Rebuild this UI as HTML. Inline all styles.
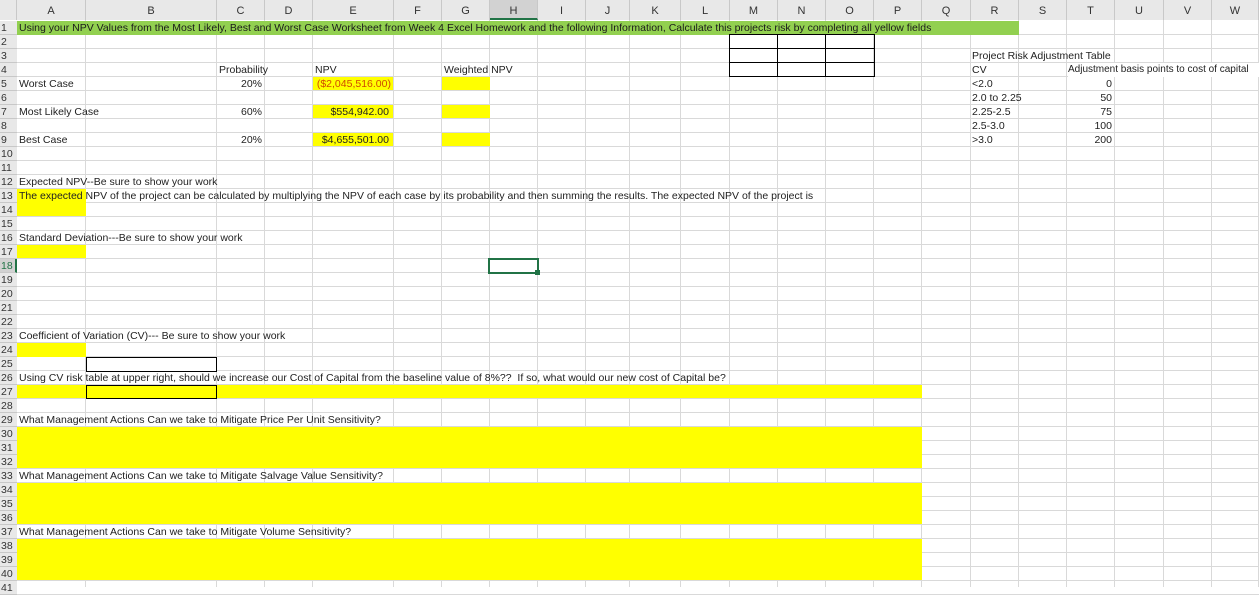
<!DOCTYPE html>
<html><head><meta charset="utf-8"><style>
body{margin:0;width:1259px;height:587px;overflow:hidden;background:#fff;font-family:"Liberation Sans",Arial,sans-serif;position:relative}
.a{position:absolute;box-sizing:border-box}
.t{position:absolute;font-size:10.5px;color:#222;white-space:nowrap;line-height:14px}
.y{position:absolute;background:#ffff00}
.h{position:absolute;top:0;height:20px;line-height:22px;text-align:center;font-size:11px;color:#333;background:#e8e8e8;border-right:1px solid #c8c8c8;box-sizing:border-box}
.r{position:absolute;left:0;width:17px;height:14px;line-height:14px;font-size:10.5px;color:#333;background:#e8e8e8;border-bottom:1px solid #c8c8c8;box-sizing:border-box;padding-left:1px}
</style></head><body>
<div id="g"></div>
<script>
var cols=[17,86,217,265,313,394,442,490,538,586,630,681,730,778,826,874,922,971,1019,1067,1115,1164,1212,1259];
var L="ABCDEFGHIJKLMNOPQRSTUVW";var s="";
for(var i=1;i<cols.length;i++)s+='<div class="a" style="left:'+(cols[i]-1)+'px;top:20px;width:1px;height:567px;background:#d9d9d9"></div>';
for(var r=1;r<=41;r++){var y=21+14*(r-1)+13;s+='<div class="a" style="left:17px;top:'+y+'px;width:1242px;height:1px;background:#d9d9d9"></div>';}
for(var i=0;i<cols.length-1;i++)s+='<div class="h" style="left:'+cols[i]+'px;width:'+(cols[i+1]-cols[i])+'px;'+(i==7?'background:#d2d2d2;border-bottom:2px solid #217346;':'')+'">'+L[i]+'</div>';
s+='<div class="h" style="left:0;width:17px;border-right:1px solid #c8c8c8"></div>';
for(var r=1;r<=41;r++)s+='<div class="r" style="top:'+(21+14*(r-1))+'px;'+(r==18?'background:#d2d2d2;color:#217346;border-right:2px solid #217346;':'')+'">'+r+'</div>';
document.getElementById('g').innerHTML=s;
</script>
<div class="a" style="left:17px;top:21px;width:1002px;height:14px;background:#92d050"></div>
<div class="t" style="left:19px;top:21px;color:#1a1a1a">Using your NPV Values from the Most Likely, Best and Worst Case Worksheet from Week 4 Excel Homework and the following Information, Calculate this projects risk by completing all yellow fields</div>
<div class="a" style="left:729px;top:34px;width:146px;height:43px;border:1px solid #000"></div>
<div class="a" style="left:729px;top:48px;width:146px;height:1px;background:#000"></div>
<div class="a" style="left:729px;top:62px;width:146px;height:1px;background:#000"></div>
<div class="a" style="left:777px;top:34px;width:1px;height:43px;background:#000"></div>
<div class="a" style="left:825px;top:34px;width:1px;height:43px;background:#000"></div>
<div class="t" style="left:219px;top:63px">Probability</div>
<div class="t" style="left:315px;top:63px">NPV</div>
<div class="t" style="left:444px;top:63px">Weighted NPV</div>
<div class="y" style="left:313px;top:77px;width:80px;height:13px"></div>
<div class="y" style="left:313px;top:105px;width:80px;height:13px"></div>
<div class="y" style="left:313px;top:133px;width:80px;height:13px"></div>
<div class="y" style="left:442px;top:77px;width:48px;height:13px"></div>
<div class="y" style="left:442px;top:105px;width:48px;height:13px"></div>
<div class="y" style="left:442px;top:133px;width:48px;height:13px"></div>
<div class="t" style="left:19px;top:77px">Worst Case</div>
<div class="t" style="left:19px;top:105px">Most Likely Case</div>
<div class="t" style="left:19px;top:133px">Best Case</div>
<div class="t" style="left:217px;width:45px;text-align:right;top:77px">20%</div>
<div class="t" style="left:217px;width:45px;text-align:right;top:105px">60%</div>
<div class="t" style="left:217px;width:45px;text-align:right;top:133px">20%</div>
<div class="t" style="left:311px;width:80px;text-align:right;top:77px;color:#d04a00;overflow:hidden">($2,045,516.00)</div>
<div class="t" style="left:313px;width:76px;text-align:right;top:105px">$554,942.00</div>
<div class="t" style="left:313px;width:76px;text-align:right;top:133px">$4,655,501.00</div>
<div class="t" style="left:972px;top:49px">Project Risk Adjustment Table</div>
<div class="t" style="left:972px;top:63px">CV</div>
<div class="t" style="left:1068px;top:63px;background:#fff;width:191px;font-size:10px">Adjustment basis points to cost of capital</div>
<div class="t" style="left:972px;top:77px">&lt;2.0</div>
<div class="t" style="left:972px;top:91px">2.0 to 2.25</div>
<div class="t" style="left:972px;top:105px">2.25-2.5</div>
<div class="t" style="left:972px;top:119px">2.5-3.0</div>
<div class="t" style="left:972px;top:133px">&gt;3.0</div>
<div class="t" style="left:1067px;width:45px;text-align:right;top:77px">0</div>
<div class="t" style="left:1067px;width:45px;text-align:right;top:91px">50</div>
<div class="t" style="left:1067px;width:45px;text-align:right;top:105px">75</div>
<div class="t" style="left:1067px;width:45px;text-align:right;top:119px">100</div>
<div class="t" style="left:1067px;width:45px;text-align:right;top:133px">200</div>
<div class="t" style="left:19px;top:175px">Expected NPV--Be sure to show your work</div>
<div class="y" style="left:17px;top:189px;width:69px;height:27px"></div>
<div class="t" style="left:19px;top:189px">The expected NPV of the project can be calculated by multiplying the NPV of each case by its probability and then summing the results. The expected NPV of the project is</div>
<div class="t" style="left:19px;top:231px">Standard Deviation---Be sure to show your work</div>
<div class="y" style="left:17px;top:245px;width:69px;height:13px"></div>
<div class="a" style="left:488px;top:258px;width:51px;height:16px;border:2px solid #217346"></div>
<div class="a" style="left:535px;top:270px;width:5px;height:5px;background:#217346"></div>
<div class="t" style="left:19px;top:329px">Coefficient of Variation (CV)--- Be sure to show your work</div>
<div class="y" style="left:17px;top:343px;width:69px;height:14px"></div>
<div class="a" style="left:86px;top:357px;width:131px;height:15px;border:1px solid #000;background:#fff"></div>
<div class="t" style="left:19px;top:371px">Using CV risk table at upper right, should we increase our Cost of Capital from the baseline value of 8%??&nbsp; If so, what would our new cost of Capital be?</div>
<div class="y" style="left:17px;top:385px;width:905px;height:13px"></div>
<div class="a" style="left:86px;top:385px;width:131px;height:14px;border:1px solid #000"></div>
<div class="t" style="left:19px;top:413px">What Management Actions Can we take to Mitigate Price Per Unit Sensitivity?</div>
<div class="y" style="left:17px;top:427px;width:905px;height:41px"></div>
<div class="t" style="left:19px;top:469px">What Management Actions Can we take to Mitigate Salvage Value Sensitivity?</div>
<div class="y" style="left:17px;top:483px;width:905px;height:41px"></div>
<div class="t" style="left:19px;top:525px">What Management Actions Can we take to Mitigate Volume Sensitivity?</div>
<div class="y" style="left:17px;top:539px;width:905px;height:41px"></div>
</body></html>
